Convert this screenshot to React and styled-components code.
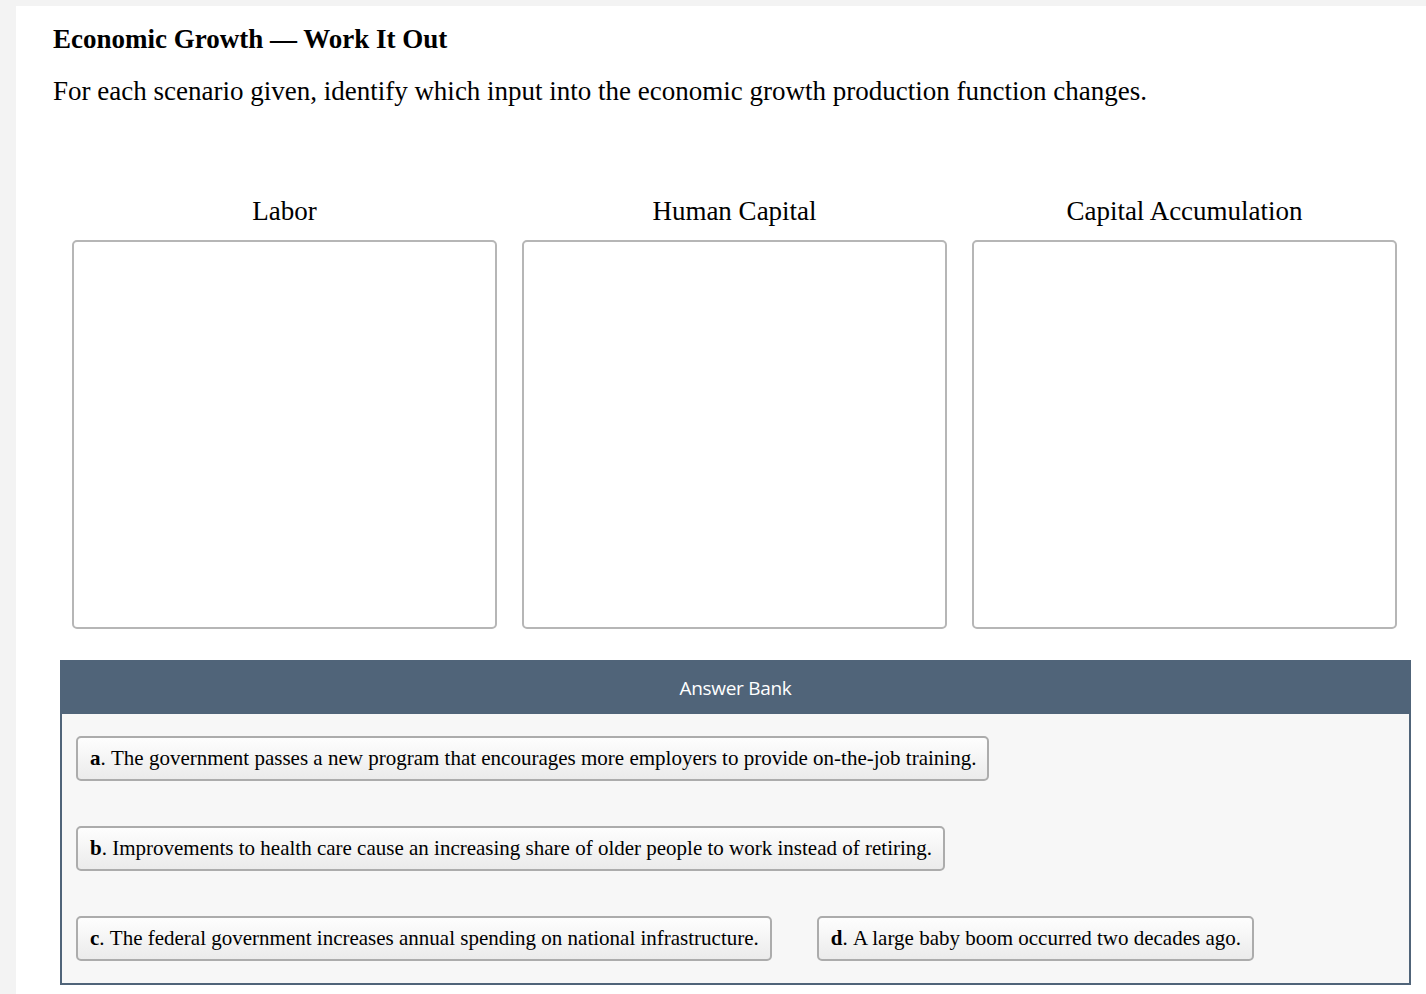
import React from "react"
import styled, { createGlobalStyle } from "styled-components"

const GlobalStyle = createGlobalStyle`
  html, body {
    margin: 0;
    padding: 0;
    background: #f3f3f3;
  }
  body {
    font-family: "Liberation Serif", "Times New Roman", serif;
    color: #000;
  }
`

const Page = styled.div`
  padding: 6px 0 0 16px;
  min-height: 994px;
  box-sizing: border-box;
`

const Sheet = styled.div`
  background: #fff;
  min-height: 1000px;
  padding: 22px 0 0 37px;
  box-sizing: border-box;
`

const Title = styled.h1`
  margin: 0;
  font-size: 27px;
  line-height: 22px;
  font-weight: bold;
`

const Prompt = styled.p`
  margin: 26px 0 0;
  font-size: 27px;
  line-height: 30px;
`

const Columns = styled.div`
  display: grid;
  grid-template-columns: repeat(3, 425px);
  column-gap: 25px;
  margin: 90px 0 0 19px;
`

const Column = styled.div`
  display: flex;
  flex-direction: column;
  align-items: center;
`

const ColumnLabel = styled.div`
  font-size: 27px;
  line-height: 30px;
  height: 30px;
  margin-bottom: 14px;
`

const DropBox = styled.div`
  width: 100%;
  height: 389px;
  box-sizing: border-box;
  border: 2px solid #b6b6b6;
  border-radius: 5px;
  background: #fff;
`

const Bank = styled.section`
  width: 1351px;
  margin: 31px 0 0 7px;
  border: 2px solid #506479;
  box-sizing: border-box;
  background: #f7f7f7;
`

const BankHeader = styled.div`
  background: #506479;
  height: 52px;
  display: flex;
  align-items: center;
  justify-content: center;
  color: #fff;
  font-family: "Open Sans", "Noto Sans", sans-serif;
  font-size: 19px;
  font-weight: 500;
  letter-spacing: -0.3px;
  padding-bottom: 1px;
  box-sizing: border-box;
`

const Chips = styled.div`
  display: flex;
  flex-wrap: wrap;
  gap: 45px;
  padding: 22px 14px 22px 14px;
`

const Chip = styled.div`
  height: 45px;
  box-sizing: border-box;
  display: flex;
  align-items: center;
  padding: 0 11px 0 12px;
  border: 2px solid #acacac;
  border-radius: 5px;
  background: linear-gradient(#fefefe, #ebebeb);
  font-size: 21px;
  white-space: nowrap;
`

const Letter = styled.b`
  font-weight: bold;
`

const columns = ["Labor", "Human Capital", "Capital Accumulation"]

const answers = [
  ["a", "The government passes a new program that encourages more employers to provide on-the-job training."],
  ["b", "Improvements to health care cause an increasing share of older people to work instead of retiring."],
  ["c", "The federal government increases annual spending on national infrastructure."],
  ["d", "A large baby boom occurred two decades ago."],
]

export default function App() {
  return (
    <>
      <GlobalStyle />
      <Page>
        <Sheet>
          <Title>Economic Growth — Work It Out</Title>
          <Prompt>
            For each scenario given, identify which input into the economic growth production function changes.
          </Prompt>
          <Columns>
            {columns.map(name => (
              <Column key={name}>
                <ColumnLabel>{name}</ColumnLabel>
                <DropBox />
              </Column>
            ))}
          </Columns>
          <Bank>
            <BankHeader>Answer Bank</BankHeader>
            <Chips>
              {answers.map(([letter, text]) => (
                <Chip key={letter}>
                  <Letter>{letter}</Letter>.&nbsp;{text}
                </Chip>
              ))}
            </Chips>
          </Bank>
        </Sheet>
      </Page>
    </>
  )
}
